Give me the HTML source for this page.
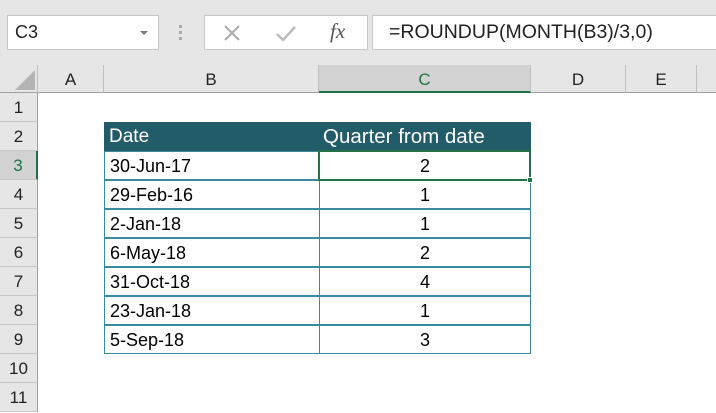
<!DOCTYPE html>
<html><head><style>
*{margin:0;padding:0;box-sizing:border-box}
body{width:716px;height:407px;overflow:hidden;background:#fff;font-family:"Liberation Sans",Carlito,sans-serif;position:relative}
.a{position:absolute}
.top{left:0;top:0;width:716px;height:65px;background:#e6e6e6}
.box{background:#fff;border:1px solid #c6c6c6}
.ch{top:65px;height:28px;background:#e6e6e6;border-right:1px solid #c0c0c0;border-bottom:1px solid #a0a0a0;text-align:center;font-size:17px;line-height:30px;color:#222}
.rh{left:0;width:38px;height:29px;background:#e6e6e6;border-right:1px solid #a0a0a0;border-bottom:1px solid #c8c8c8;text-align:center;font-size:17px;line-height:30px;color:#222}
.c{height:29px;border:1px solid #3a8aa0;font-size:18px;line-height:29px;color:#000}
</style></head><body>
<div class="a top"></div>
<div class="a box" style="left:7px;top:15px;width:152px;height:35px;font-size:18px;line-height:33px;padding-left:7px;color:#222">C3</div>
<div class="a" style="left:140px;top:31px;width:0;height:0;border-left:4px solid transparent;border-right:4px solid transparent;border-top:4px solid #777"></div>
<div class="a" style="left:179px;top:25px;width:3px;height:3px;background:#aaa;box-shadow:0 6px 0 #aaa,0 12px 0 #aaa"></div>
<div class="a box" style="left:204px;top:15px;width:164px;height:35px"></div>
<svg class="a" style="left:222px;top:23px" width="20" height="20"><path d="M3 3L17 17M17 3L3 17" stroke="#aaa" stroke-width="2"/></svg>
<svg class="a" style="left:275px;top:23px" width="22" height="20"><path d="M2 11L8 17L20 4" stroke="#bbb" stroke-width="2.5" fill="none"/></svg>
<div class="a" style="left:330px;top:19px;font-family:'Liberation Serif',serif;font-style:italic;font-size:21px;color:#555">fx</div>
<div class="a box" style="left:372px;top:15px;width:350px;height:35px;font-size:19.5px;line-height:33px;padding-left:16px;color:#222">=ROUNDUP(MONTH(B3)/3,0)</div>
<div class="a" style="left:0;top:65px;width:38px;height:28px;background:#e6e6e6;border-right:1px solid #c0c0c0;border-bottom:1px solid #a0a0a0"></div>
<svg class="a" style="left:15px;top:70px" width="22" height="22"><path d="M20 0L20 20L0 20Z" fill="#b4b4b4"/></svg>
<div class="a ch" style="left:38px;width:66px">A</div>
<div class="a ch" style="left:104px;width:215px">B</div>
<div class="a ch" style="left:319px;width:212px;background:#d2d2d2;border-bottom:2px solid #217346;color:#217346">C</div>
<div class="a ch" style="left:531px;width:95px">D</div>
<div class="a ch" style="left:626px;width:71px">E</div>
<div class="a ch" style="left:697px;width:30px"></div>
<div class="a rh" style="top:93px">1</div>
<div class="a rh" style="top:122px">2</div>
<div class="a rh" style="top:151px;background:#d2d2d2;border-right:2px solid #217346;color:#217346">3</div>
<div class="a rh" style="top:180px">4</div>
<div class="a rh" style="top:209px">5</div>
<div class="a rh" style="top:238px">6</div>
<div class="a rh" style="top:267px">7</div>
<div class="a rh" style="top:296px">8</div>
<div class="a rh" style="top:325px">9</div>
<div class="a rh" style="top:354px">10</div>
<div class="a rh" style="top:383px">11</div>
<div class="a" style="left:104px;top:122px;width:427px;height:30px;background:#235c69"></div>
<div class="a" style="left:109px;top:122px;font-size:19px;line-height:30px;color:#fff">Date</div>
<div class="a" style="left:323px;top:122px;font-size:20.5px;line-height:30px;color:#fff">Quarter from date</div>
<div id="t"></div>
<script>
var d=[["30-Jun-17",2],["29-Feb-16",1],["2-Jan-18",1],["6-May-18",2],["31-Oct-18",4],["23-Jan-18",1],["5-Sep-18",3]],h="";
d.forEach(function(r,i){var y=151+i*29;
h+='<div class="a c" style="left:104px;top:'+y+'px;width:216px;padding-left:5px">'+r[0]+'</div>';
h+='<div class="a c" style="left:319px;top:'+y+'px;width:212px;text-align:center">'+r[1]+'</div>';});
document.getElementById("t").innerHTML=h;
</script>
<div class="a" style="left:318px;top:150px;width:213px;height:31px;border:2px solid #217346"></div>
<div class="a" style="left:527px;top:177px;width:6px;height:6px;background:#217346;border:1px solid #fff"></div>
</body></html>
